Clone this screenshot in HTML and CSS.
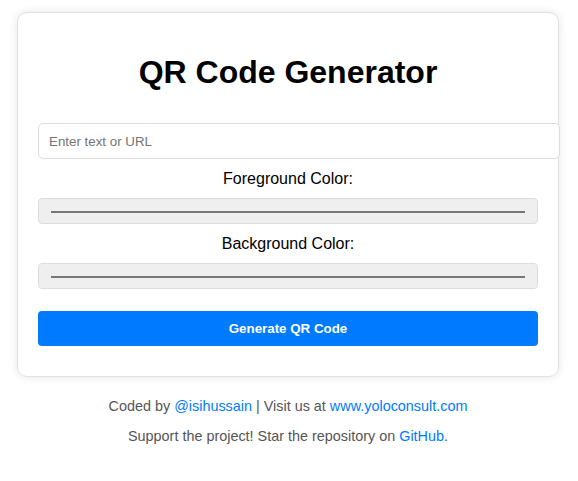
FILE: index.html
```html
<!DOCTYPE html>
<html lang="en">
<head>
<meta charset="utf-8">
<title>QR Code Generator</title>
<link rel="stylesheet" href="styles.css">
</head>
<body>
<div class="page">
  <div class="card">
    <h1 class="title">QR Code Generator</h1>
    <input class="text-input" type="text" placeholder="Enter text or URL">
    <label class="label">Foreground Color:</label>
    <div class="color-box"><span class="swatch"></span></div>
    <label class="label">Background Color:</label>
    <div class="color-box"><span class="swatch"></span></div>
    <button class="btn" type="button">Generate QR Code</button>
  </div>
  <div class="footer">
    <p class="foot-line">Coded by <a href="#">@isihussain</a> | Visit us at <a href="#">www.yoloconsult.com</a></p>
    <p class="foot-line">Support the project! Star the repository on <a href="#">GitHub</a>.</p>
  </div>
</div>
</body>
</html>
```

FILE: styles.css
```css
html, body {
  margin: 0;
  padding: 0;
  background: #fff;
  font-family: "Liberation Sans", Arial, sans-serif;
}

.page {
  padding: 12px 9px 0 7px;
}

.card {
  width: 500px;
  margin: 0 auto;
  padding: 20px;
  border: 1px solid #e2e2e2;
  border-radius: 10px;
  box-shadow: 0 0 10px rgba(0, 0, 0, 0.1);
  text-align: center;
  background: #fff;
}

.title {
  font-size: 32px;
  font-weight: bold;
  color: #000;
  margin: 21px 0 32px;
  line-height: 37px;
}

.text-input {
  display: block;
  width: 100%;
  height: 14px;
  margin: 10px 0;
  padding: 11px 10px 9px;
  border: 1px solid #ddd;
  border-radius: 5px;
  font-family: "Liberation Sans", Arial, sans-serif;
  font-size: 13.33px;
  line-height: 14px;
  color: #333;
  background: #fff;
  outline: none;
}

.text-input::placeholder {
  color: #757575;
}

.label {
  display: block;
  font-size: 16px;
  line-height: 19px;
  color: #000;
  margin: 10px 0;
}

.color-box {
  display: flex;
  align-items: center;
  box-sizing: border-box;
  height: 26px;
  margin: 10px 0;
  padding: 0 12px;
  background: #efefef;
  border: 1px solid #ddd;
  border-radius: 4px;
}

.swatch {
  flex: 1;
  height: 2px;
  background: #777;
  margin-top: 1px;
}

.btn {
  display: block;
  width: 100%;
  margin: 22px 0 10px;
  padding: 10px;
  border: none;
  border-radius: 4px;
  background: #007bff;
  color: #fff;
  font-family: "Liberation Sans", Arial, sans-serif;
  font-size: 13.33px;
  font-weight: bold;
  line-height: 15px;
}

.footer {
  margin-top: 21px;
  text-align: center;
}

.foot-line {
  margin: 14px 0;
  font-size: 14.4px;
  line-height: 16px;
  color: #555;
}

.foot-line a {
  color: #007bff;
  text-decoration: none;
}
```
